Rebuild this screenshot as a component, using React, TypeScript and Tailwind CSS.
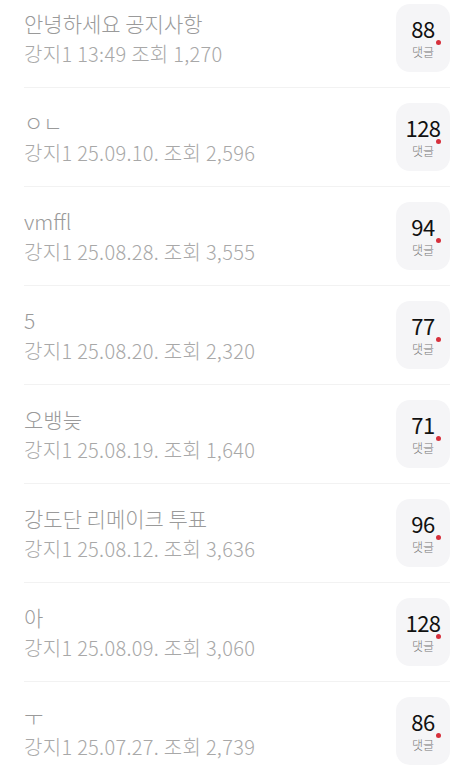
import React from 'react';

interface Post {
    title: string;
    date: string;
    views: string;
    comments: number;
}

const posts: Post[] = [
    { title: '안녕하세요 공지사항', date: '13:49', views: '1,270', comments: 88 },
    { title: 'ㅇㄴ', date: '25.09.10.', views: '2,596', comments: 128 },
    { title: 'vmffl', date: '25.08.28.', views: '3,555', comments: 94 },
    { title: '5', date: '25.08.20.', views: '2,320', comments: 77 },
    { title: '오뱅늦', date: '25.08.19.', views: '1,640', comments: 71 },
    { title: '강도단 리메이크 투표', date: '25.08.12.', views: '3,636', comments: 96 },
    { title: '아', date: '25.08.09.', views: '3,060', comments: 128 },
    { title: 'ㅜ', date: '25.07.27.', views: '2,739', comments: 86 },
];

const PostRow: React.FC<{ post: Post }> = ({ post }) => {
    return (
        <div className="flex items-center gap-3 py-[15px] border-b border-[#f2f2f2]">
            <div className="flex-grow min-w-0 flex flex-col gap-[3px]">
                <p className="text-[21px] leading-[28px] font-light text-[#9a9a9a] truncate">{post.title}</p>
                <p className="text-[20px] leading-[28px] font-light tracking-[0.3px] text-[#a8a8a8] truncate">
                    강지1 {post.date} 조회 {post.views}
                </p>
            </div>
            <div className="relative w-[54px] h-[68px] flex-shrink-0 rounded-[14px] bg-[#f5f5f7] flex flex-col items-center">
                <span className="mt-[10px] text-[22px] leading-[28px] text-[#111] tracking-[-0.5px]">{post.comments}</span>
                <span className="mt-[2px] text-[12px] leading-[16px] font-light text-[#777]">댓글</span>
                <span className="absolute left-[40px] top-[36px] w-[5px] h-[5px] rounded-full bg-[#d6303c]" />
            </div>
        </div>
    );
};

export default function App() {
    return (
        <div className="w-[474px] h-[772px] overflow-hidden bg-white" style={{ fontFamily: '"Noto Sans CJK KR", "Noto Sans", sans-serif' }}>
            <div className="px-6 -mt-[11px]">
                {posts.map((post, i) => (
                    <PostRow key={i} post={post} />
                ))}
            </div>
        </div>
    );
}
